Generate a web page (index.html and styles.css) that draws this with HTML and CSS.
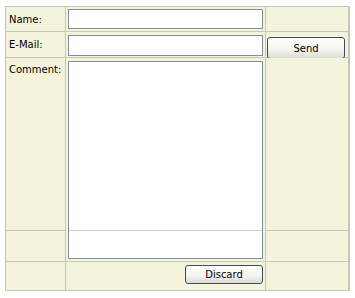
FILE: index.html
```html
<!DOCTYPE html>
<html lang="en">
<head>
    <meta charset="UTF-8">
    <title>Comment form</title>
    <link rel="stylesheet" href="styles.css">
</head>
<body>
    <form class="form">
        <div class="cell label">Name:</div>
        <div class="cell field"><input class="input" type="text"></div>
        <div class="cell"></div>

        <div class="cell label">E-Mail:</div>
        <div class="cell field"><input class="input email" type="text"></div>
        <div class="cell side"><button class="btn send" type="button">Send</button></div>

        <div class="cell label top">Comment:</div>
        <div class="cell field area"><textarea class="comment"></textarea></div>
        <div class="cell"></div>

        <div class="cell"></div>
        <div class="cell"></div>

        <div class="cell"></div>
        <div class="cell actions"><button class="btn discard" type="button">Discard</button></div>
        <div class="cell"></div>
    </form>
</body>
</html>
```

FILE: styles.css
```css
body {
    margin: 0;
    padding: 6px 0 0 5px;
    background: #fff;
    font-family: "DejaVu Sans", Tahoma, sans-serif;
    font-size: 10px;
    color: #000;
}
.form {
    display: grid;
    grid-template-columns: 59px 199px 82px;
    grid-template-rows: 24px 25px 172px 30px 28px;
    gap: 1px;
    width: 343px;
    background: #c6c6b9;
    border: 1px solid #c6c6b9;
}
.cell {
    background: #f4f4dd;
}
.label {
    display: flex;
    align-items: center;
    padding-left: 3px;
}
.label.top {
    align-items: flex-start;
    padding-top: 6px;
}
.field {
    padding-left: 2px;
    display: flex;
    align-items: center;
}
.input {
    box-sizing: border-box;
    width: 195px;
    height: 20px;
    margin: 0;
    border: 1px solid #7f8e9c;
    background: #fff;
}
.email {
    height: 21px;
    margin-top: 1px;
}
.area {
    grid-row: span 2;
    align-items: flex-start;
}
.comment {
    box-sizing: border-box;
    width: 195px;
    height: 198px;
    margin: 3px 0 0;
    border: 1px solid #7f8e9c;
    resize: none;
    background: linear-gradient(to bottom, #fff 168px, #cfcfc6 168px, #cfcfc6 169px, #fff 169px);
}
.side {
    padding: 5px 0 0 1px;
}
.btn {
    display: block;
    box-sizing: border-box;
    font-family: "DejaVu Sans", Tahoma, sans-serif;
    font-size: 10px;
    color: #000;
    border: 1px solid #3c4c5a;
    border-radius: 3px;
    background: linear-gradient(to bottom, #ffffff, #f3f3ef 60%, #dcdcd4);
    padding: 0;
    cursor: pointer;
}
.send {
    width: 78px;
    height: 22px;
}
.actions {
    display: flex;
    justify-content: flex-end;
    align-items: flex-start;
    padding: 3px 2px 0 0;
}
.discard {
    width: 78px;
    height: 19px;
}
```
